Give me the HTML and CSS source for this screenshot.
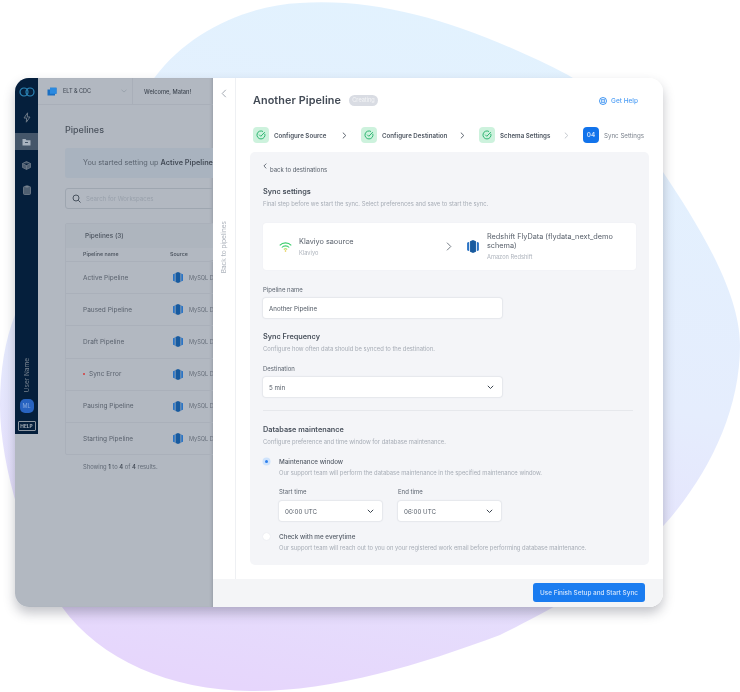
FILE: index.html
```html
<!DOCTYPE html>
<html lang="en">
<head>
<meta charset="utf-8">
<title>Another Pipeline</title>
<link rel="stylesheet" href="styles.css">
</head>
<body>
<svg class="blob" viewBox="0 0 740 692" aria-hidden="true">
  <defs>
    <linearGradient id="blobfill" x1="0.55" y1="0" x2="0.35" y2="1">
      <stop offset="0" stop-color="#e2f2fe"/>
      <stop offset="0.5" stop-color="#e5edfd"/>
      <stop offset="1" stop-color="#e6d6fc"/>
    </linearGradient>
  </defs>
  <path fill="url(#blobfill)" d="M300 3C390-3 480 30 568 75C610 100 640 140 663 172C695 220 740 290 740 345C740 420 700 490 650 540C600 585 540 615 500 635C420 665 330 692 250 691C170 690 100 660 62 607C30 560 0 470 0 405C0 370 5 340 15 315C50 220 110 130 155 77C190 30 250 5 300 3Z"/>
</svg>
<div class="window">
  <section class="app">
    <nav class="rail">
      <svg class="rail-logo" width="16" height="10" viewBox="0 0 16 10"><circle cx="5" cy="5" r="4" fill="none" stroke="#2c86b8" stroke-width="1.2"/><circle cx="11" cy="5" r="4" fill="none" stroke="#2c86b8" stroke-width="1.2"/></svg>
      <div class="rail-item"><svg width="8" height="11" viewBox="0 0 8 11"><path d="M4.6.8 1 6h2.6l-.3 4.2L7 5H4.3z" fill="none" stroke="#6b7785" stroke-width="1"/></svg></div>
      <div class="rail-item active"><svg width="9" height="8" viewBox="0 0 9 8"><path d="M.5 1h3l1 1.200h4v5.300h-8z" fill="#a9b3bf"/><path d="M3 4.500h3" stroke="#45566a"/></svg></div>
      <div class="rail-item"><svg width="9" height="9" viewBox="0 0 9 9"><path d="M4.500.5 8.500 2.500v4l-4 2-4-2v-4zM.5 2.500l4 2 4-2M4.500 4.500v4" fill="#4f5f71" stroke="#76818e" stroke-width=".7"/></svg></div>
      <div class="rail-item"><svg width="8" height="10" viewBox="0 0 8 10"><rect x=".5" y="1.500" width="7" height="8" rx="1" fill="#4f5f71" stroke="#76818e" stroke-width=".8"/><rect x="2.500" y=".5" width="3" height="2" fill="#76818e"/></svg></div>
      <div class="rail-spacer"></div>
      <span class="rail-user">User Name</span>
      <span class="avatar">ML</span>
      <span class="help-tag">HELP</span>
    </nav>
    <div class="app-main">
      <header class="topbar">
        <div class="product">
          <svg width="10" height="9" viewBox="0 0 10 9"><path d="M3 .8h6.500v6H8v1.700H.5v-6H3z" fill="#1a6fc2"/><path d="M3 .8h6.500v6H3z" fill="#2b8ae0"/></svg>
          <span>ELT &amp; CDC</span>
          <svg class="product-chevron" width="6" height="4" viewBox="0 0 6 4"><path d="M.5.8 3 3 5.500.8" fill="none" stroke="#9ba3ad"/></svg>
        </div>
        <span class="welcome">Welcome, Matan!</span>
      </header>
      <div class="content">
        <h1 class="page-title">Pipelines</h1>
        <div class="banner">You started setting up <b>Active Pipeline</b></div>
        <div class="search">
          <svg width="9" height="9" viewBox="0 0 9 9"><circle cx="4" cy="4" r="3" fill="none" stroke="#49535f"/><path d="m6.200 6.200 2.300 2.300" stroke="#49535f"/></svg>
          <span>Search for Workspaces</span>
        </div>
        <div class="table">
          <div class="table-title">Pipelines (3)</div>
          <div class="table-head"><span class="col-head">Pipeline name</span><span>Source</span></div>
          <div class="table-row"><span class="col-name">Active Pipeline</span><svg class="db" viewBox="0 0 10 11"><use href="#dbicon"/></svg><span class="col-src">MySQL Database</span></div>
          <div class="table-row"><span class="col-name">Paused Pipeline</span><svg class="db" viewBox="0 0 10 11"><use href="#dbicon"/></svg><span class="col-src">MySQL Database</span></div>
          <div class="table-row"><span class="col-name">Draft Pipeline</span><svg class="db" viewBox="0 0 10 11"><use href="#dbicon"/></svg><span class="col-src">MySQL Database</span></div>
          <div class="table-row"><span class="col-name"><i class="dot"></i>Sync Error</span><svg class="db" viewBox="0 0 10 11"><use href="#dbicon"/></svg><span class="col-src">MySQL Database</span></div>
          <div class="table-row"><span class="col-name">Pausing Pipeline</span><svg class="db" viewBox="0 0 10 11"><use href="#dbicon"/></svg><span class="col-src">MySQL Database</span></div>
          <div class="table-row"><span class="col-name">Starting Pipeline</span><svg class="db" viewBox="0 0 10 11"><use href="#dbicon"/></svg><span class="col-src">MySQL Database</span></div>
        </div>
        <p class="results">Showing <b>1</b> to <b>4</b> of <b>4</b> results.</p>
      </div>
    </div>
  </section>
  <section class="drawer">
    <div class="drawer-top">
      <aside class="back-strip">
        <svg class="back-chevron" width="6" height="9" viewBox="0 0 6 9"><path d="M4.800.8 1.200 4.500l3.600 3.700" fill="none" stroke="#a3a9b2" stroke-width="1"/></svg>
        <span class="back-label">Back to pipelines</span>
      </aside>
      <div class="drawer-scroll">
        <div class="title-row">
          <h2>Another Pipeline</h2>
          <span class="badge">Creating</span>
          <a class="get-help"><svg width="8" height="8" viewBox="0 0 8 8"><circle cx="4" cy="4" r="3.500" fill="none" stroke="#2e8bf0" stroke-width=".9"/><circle cx="4" cy="4" r="1.500" fill="none" stroke="#2e8bf0" stroke-width=".8"/><path d="m1.500 1.500 1.400 1.400m2.200 2.200 1.400 1.400m0-5L5.100 2.900M2.900 5.100 1.500 6.500" stroke="#2e8bf0" stroke-width=".7"/></svg>Get Help</a>
        </div>
        <div class="steps">
          <span class="step-done"><svg width="10" height="10" viewBox="0 0 10 10"><path d="M8.800 3.800A4 4 0 1 1 7 1.500" fill="none" stroke="#2fb673" stroke-width="1"/><path d="m3.200 4.700 1.600 1.600 4-4.200" fill="none" stroke="#2fb673" stroke-width="1"/></svg></span>
          <span class="step-text s1">Configure Source</span>
          <svg class="step-arrow" width="5" height="7" viewBox="0 0 5 7"><path d="m.8.6 3 2.900-3 2.900" fill="none" stroke="#5d6570"/></svg>
          <span class="step-done"><svg width="10" height="10" viewBox="0 0 10 10"><path d="M8.800 3.800A4 4 0 1 1 7 1.500" fill="none" stroke="#2fb673" stroke-width="1"/><path d="m3.200 4.700 1.600 1.600 4-4.200" fill="none" stroke="#2fb673" stroke-width="1"/></svg></span>
          <span class="step-text s2">Configure Destination</span>
          <svg class="step-arrow" width="5" height="7" viewBox="0 0 5 7"><path d="m.8.6 3 2.900-3 2.900" fill="none" stroke="#5d6570"/></svg>
          <span class="step-done"><svg width="10" height="10" viewBox="0 0 10 10"><path d="M8.800 3.800A4 4 0 1 1 7 1.500" fill="none" stroke="#2fb673" stroke-width="1"/><path d="m3.200 4.700 1.600 1.600 4-4.200" fill="none" stroke="#2fb673" stroke-width="1"/></svg></span>
          <span class="step-text s3">Schema Settings</span>
          <svg class="step-arrow" width="5" height="7" viewBox="0 0 5 7"><path d="m.8.6 3 2.900-3 2.900" fill="none" stroke="#c4c8ce"/></svg>
          <span class="step-now">04</span>
          <span class="step-text current">Sync Settings</span>
        </div>
        <div class="panel">
          <a class="back-link"><svg width="4" height="6" viewBox="0 0 4 6"><path d="M3.300.6.900 3l2.400 2.400" fill="none" stroke="#5d6570" stroke-width=".9"/></svg><span>back to destinations</span></a>
          <h3 class="h-sync">Sync settings</h3>
          <p class="hint">Final step before we start the sync. Select preferences and save to start the sync.</p>
          <div class="conn">
            <div class="conn-source">
              <svg width="13" height="10" viewBox="0 0 13 10"><path d="M.7 3.400a8 8 0 0 1 11.600 0" fill="none" stroke="#3ecf6e" stroke-width="1.100"/><path d="M2.800 5.500a5 5 0 0 1 7.400 0" fill="none" stroke="#3ecf6e" stroke-width="1.100"/><path d="M4.800 7.400a2.400 2.400 0 0 1 3.400 0" fill="none" stroke="#a8d64b" stroke-width="1.100"/><circle cx="6.500" cy="9" r=".8" fill="#e3c83a"/></svg>
              <div><div class="conn-name">Klaviyo saource</div><div class="conn-type">Klaviyo</div></div>
            </div>
            <svg class="conn-arrow" width="6" height="9" viewBox="0 0 6 9"><path d="m1 .7 3.800 3.800L1 8.300" fill="none" stroke="#646c76" stroke-width=".9"/></svg>
            <div class="conn-dest">
              <svg class="dest-icon" viewBox="0 0 10 11"><use href="#dbicon"/></svg>
              <div><div class="conn-name wrap">Redshift FlyData (flydata_next_demo schema)</div><div class="conn-type">Amazon Redshift</div></div>
            </div>
          </div>
          <label class="field-label fl-name">Pipeline name</label>
          <div class="input">Another Pipeline</div>
          <h3 class="h-freq">Sync Frequency</h3>
          <p class="hint">Configure how often data should be synced to the destination.</p>
          <label class="field-label fl-dest">Destination</label>
          <div class="input select">5 min<svg width="7" height="5" viewBox="0 0 7 5"><path d="m.8.8 2.700 2.700L6.200.8" fill="none" stroke="#3d4651" stroke-width="1"/></svg></div>
          <hr class="rule">
          <h3 class="h-db">Database maintenance</h3>
          <p class="hint">Configure preference and time window for database maintenance.</p>
          <div class="option opt-first">
            <span class="radio on"></span>
            <div class="option-body">
              <div class="option-title">Maintenance window</div>
              <p class="hint">Our support team will perform the database maintenance in the specified maintenance window.</p>
              <div class="times">
                <div class="time-col">
                  <label class="field-label">Start time</label>
                  <div class="input select small">00:00 UTC<svg width="7" height="5" viewBox="0 0 7 5"><path d="m.8.8 2.700 2.700L6.200.8" fill="none" stroke="#3d4651" stroke-width="1"/></svg></div>
                </div>
                <div class="time-col">
                  <label class="field-label">End time</label>
                  <div class="input select small">06:00 UTC<svg width="7" height="5" viewBox="0 0 7 5"><path d="m.8.8 2.700 2.700L6.200.8" fill="none" stroke="#3d4651" stroke-width="1"/></svg></div>
                </div>
              </div>
            </div>
          </div>
          <div class="option opt-second">
            <span class="radio"></span>
            <div class="option-body">
              <div class="option-title">Check with me everytime</div>
              <p class="hint">Our support team will reach out to you on your registered work email before performing database maintenance.</p>
            </div>
          </div>
        </div>
      </div>
    </div>
    <footer class="drawer-foot"><button class="cta" type="button">Use Finish Setup and Start Sync</button></footer>
  </section>
</div>
<svg class="defs" width="0" height="0" aria-hidden="true">
  <defs>
    <g id="dbicon">
      <path d="M0 2.300 1.800 1.500v8L0 8.700z" fill="#2a73c4"/>
      <path d="M10 2.300 8.200 1.500v8L10 8.700z" fill="#2a73c4"/>
      <path d="M2.500 1 5 0l2.500 1v9L5 11l-2.500-1z" fill="#175a9f"/>
    </g>
  </defs>
</svg>
</body>
</html>
```
FILE: styles.css
```css
* { box-sizing: border-box; }
html, body { margin: 0; padding: 0; }
body {
  position: relative;
  width: 740px;
  height: 692px;
  overflow: hidden;
  padding: 78px 0 0 15px;
  background: #fff;
  font-family: Inter, "Liberation Sans", sans-serif;
  color: #3d4651;
}
h1, h2, h3, p { margin: 0; font-weight: 600; }
a { color: inherit; text-decoration: none; }
.blob { position: absolute; left: 0; top: 0; width: 740px; height: 692px; }
.defs { position: absolute; }

.window {
  position: relative;
  display: flex;
  width: 648px;
  height: 529px;
  border-radius: 14px;
  overflow: hidden;
  box-shadow: 0 6px 12px rgba(40, 44, 60, .28);
  filter: blur(.45px);
}

/* dimmed app behind the drawer */
.app {
  display: flex;
  align-items: flex-start;
  width: 198px;
  height: 529px;
  background: #b2b8c1;
  box-shadow: inset -3px 0 3px -2px rgba(70, 76, 88, .25);
}
.rail {
  display: flex;
  flex: none;
  flex-direction: column;
  align-items: center;
  width: 23px;
  height: 356px;
  background: #051f3c;
  padding-top: 9px;
}
.rail-logo { margin-bottom: 12px; }
.rail-item { display: flex; align-items: center; justify-content: center; width: 100%; height: 17px; margin-bottom: 7px; }
.rail-item.active { background: #45566a; }
.rail-spacer { flex: 1; }
.rail-user { writing-mode: vertical-rl; transform: rotate(180deg); font-size: 6.500px; color: #76818e; margin-bottom: 7px; }
.avatar {
  display: flex; align-items: center; justify-content: center;
  width: 14px; height: 14px; border-radius: 5px;
  background: #2863c0; color: #7da2dc; font-size: 5.500px; font-weight: 500;
  margin-bottom: 8px;
}
.help-tag {
  display: block; width: 18px; height: 10px; line-height: 8px; text-align: center;
  border: 1px solid #8d96a1; border-radius: 1px;
  font-size: 4.800px; font-weight: 700; color: #a9b1ba; margin-bottom: 3px;
}
.app-main { flex: 1; min-width: 0; overflow: hidden; height: 529px; }
.topbar { display: flex; align-items: center; height: 27px; border-bottom: 1px solid #a9afb9; }
.product {
  display: flex; align-items: center; flex: none; width: 95px; height: 27px;
  padding-left: 9px; border-right: 1px solid #a9afb9;
  font-size: 5.500px; font-weight: 500; color: #474f5a; white-space: nowrap;
}
.product span { margin-left: 6px; }
.product-chevron { margin-left: 30px; }
.welcome { margin-left: 11px; font-size: 5.700px; font-weight: 500; color: #3f4752; white-space: nowrap; }
.content { padding: 19px 0 0 27px; width: 300px; }
.page-title { font-size: 9px; font-weight: 500; color: #4a525d; line-height: 12px; }
.banner {
  width: 280px; height: 30px; margin-top: 12px; padding-left: 18px;
  background: #a9b3bf; border-radius: 3px;
  font-size: 7.300px; line-height: 30px; font-weight: 400; color: #5b6470; white-space: nowrap;
}
.banner b { font-weight: 600; color: #434b56; }
.search {
  display: flex; align-items: center; gap: 5px;
  width: 280px; height: 21px; margin-top: 10px; padding-left: 6px;
  border: 1px solid #9ea6b0; border-radius: 3px;
  font-size: 6.100px; color: #98a0ab;
}
.table { width: 280px; margin-top: 14px; border: 1px solid #aab0ba; border-radius: 2px; }
.table-title { height: 24px; padding-left: 19px; font-size: 6.500px; font-weight: 500; line-height: 24px; color: #4d5560; background: #aeb5be; }
.table-head { display: flex; height: 12px; align-items: center; padding-left: 17px; font-size: 5.300px; font-weight: 500; color: #4a525d; background: #b2b8c1; margin-bottom: 1px; }
.col-head { width: 87px; flex: none; }
.table-row {
  display: flex; align-items: center; height: 32.200px; padding-left: 17px;
  border-top: 1px solid #aab0ba;
  font-size: 6.500px; color: #5a626e; white-space: nowrap;
}
.col-name { display: flex; align-items: center; width: 90px; flex: none; }
.db { width: 10px; height: 11px; flex: none; }
.col-src { margin-left: 6px; font-size: 5.600px; color: #656d79; }
.dot { width: 2px; height: 2px; border-radius: 50%; background: #d63a3a; margin-right: 4px; }
.results { margin: 8px 0 0 18px; font-size: 5.800px; font-weight: 400; color: #636b77; }
.results b { font-weight: 600; color: #434b56; }

/* drawer */
.drawer { display: flex; flex-direction: column; width: 450px; height: 529px; background: #fff; }
.drawer-top { display: flex; flex: 1; min-height: 0; }
.back-strip {
  display: flex; flex-direction: column; align-items: center;
  width: 23px; flex: none; border-right: 1px solid #eef0f3; padding-top: 11px;
}
.back-label { writing-mode: vertical-rl; transform: rotate(180deg); font-size: 6.500px; color: #adb3bc; margin-top: 123px; }
.drawer-scroll { flex: 1; min-width: 0; padding: 0 14px; }
.title-row { display: flex; align-items: center; height: 45px; }
.title-row h2 { font-size: 10.800px; font-weight: 600; color: #424a55; letter-spacing: .1px; margin-left: 3px; }
.badge {
  display: block; width: 29px; height: 11px; margin-left: 8px; border-radius: 6px;
  background: #d9dce3; color: #f4f5f7; font-size: 5.600px; line-height: 11px; text-align: center;
}
.get-help { display: flex; align-items: center; gap: 4px; margin-left: auto; margin-right: 11px; font-size: 6.500px; font-weight: 500; color: #4e9ef5; }
.steps { display: flex; align-items: center; height: 16px; margin-top: 4px; padding-left: 3px; }
.step-done { display: flex; align-items: center; justify-content: center; flex: none; width: 16px; height: 16px; border-radius: 4px; background: #cdf2dd; }
.step-now { flex: none; width: 16px; height: 16px; border-radius: 4px; background: #1273eb; color: #cfe2fb; font-size: 6.300px; font-weight: 600; line-height: 16px; text-align: center; }
.step-text { margin-left: 5px; font-size: 6.200px; font-weight: 600; color: #4e5661; white-space: nowrap; }
.step-text.current { font-weight: 400; color: #7d848e; }
.step-arrow { flex: none; margin: 0 14px; }
.s1 { width: 54px; }
.s2 { width: 64px; }
.s3 { width: 50px; }
.panel {
  width: 399px; height: 413px; margin-top: 9px; padding: 0 13px;
  background: #f4f5f8; border-radius: 5px;
}
.back-link { display: flex; align-items: flex-start; gap: 3px; padding-top: 11px; height: 26px; font-size: 6px; font-weight: 400; color: #565e69; }
.back-link span { margin-top: 3px; }
h3 { font-size: 7.300px; font-weight: 600; color: #4a525d; line-height: 10px; }
.hint { font-size: 5.850px; font-weight: 400; line-height: 8px; color: #a7adb6; white-space: nowrap; }
.h-sync { margin-top: 9px; }
.h-sync + .hint { margin-top: 3px; }
.conn {
  display: flex; align-items: center; width: 373px; height: 47px; margin-top: 15px;
  background: #fff; border-radius: 3px; box-shadow: 0 0 1px rgba(80, 90, 110, .1);
}
.conn-source { display: flex; align-items: center; gap: 7px; width: 180px; padding-left: 16px; }
.conn-name { font-size: 7.300px; font-weight: 400; line-height: 9px; color: #565e69; }
.conn-name.wrap { width: 136px; }
.conn-type { font-size: 5.700px; line-height: 8px; color: #adb3bc; margin-top: 3px; }
.conn-arrow { margin-left: 3px; }
.conn-dest { display: flex; align-items: center; gap: 8px; margin-left: 15px; }
.dest-icon { width: 12px; height: 13px; flex: none; }
.field-label { display: block; font-size: 6px; line-height: 8px; font-weight: 400; color: #5d6570; }
.fl-name { margin-top: 16px; }
.input {
  display: flex; align-items: center; width: 239px; height: 20px; margin-top: 4px; padding-left: 6px;
  background: #fff; border-radius: 3px; box-shadow: 0 0 1px 1px rgba(90, 100, 120, .09);
  font-size: 6.200px; color: #535b66;
}
.select { justify-content: space-between; padding-right: 8px; }
.input.small { width: 103px; margin-top: 5px; }
.h-freq { margin-top: 14px; }
.h-freq + .hint { margin-top: 3px; }
.fl-dest { margin-top: 12px; }
.rule { width: 370px; height: 1px; margin: 13px 0 0; border: 0; background: #e6e8ec; }
.h-db { margin-top: 14px; }
.h-db + .hint { margin-top: 3px; }
.option { display: flex; gap: 9px; }
.opt-first { margin-top: 12px; }
.opt-second { margin-top: 12px; }
.radio { flex: none; width: 7px; height: 7px; border-radius: 50%; background: #fff; box-shadow: 0 0 1px rgba(90, 100, 120, .2); }
.radio.on { background: #2f80ed; border: 2px solid #cfe3fc; box-shadow: 0 0 0 .5px #cfe3fc; }
.option-body { min-width: 0; }
.option-title { font-size: 6.300px; line-height: 9px; font-weight: 500; color: #565e69; }
.option-title + .hint { margin-top: 2px; }
.times { display: flex; gap: 16px; margin-top: 11px; }
.drawer-foot { display: flex; align-items: center; justify-content: flex-end; flex: none; height: 28px; padding: 0 18px 1px 0; background: #f4f5f7; }
.cta {
  width: 112px; height: 19px; padding: 0; border: 0; border-radius: 3px;
  background: #1a7cf0; color: #d5e6fc;
  font-family: inherit; font-size: 6.400px; font-weight: 500; white-space: nowrap;
}
```
